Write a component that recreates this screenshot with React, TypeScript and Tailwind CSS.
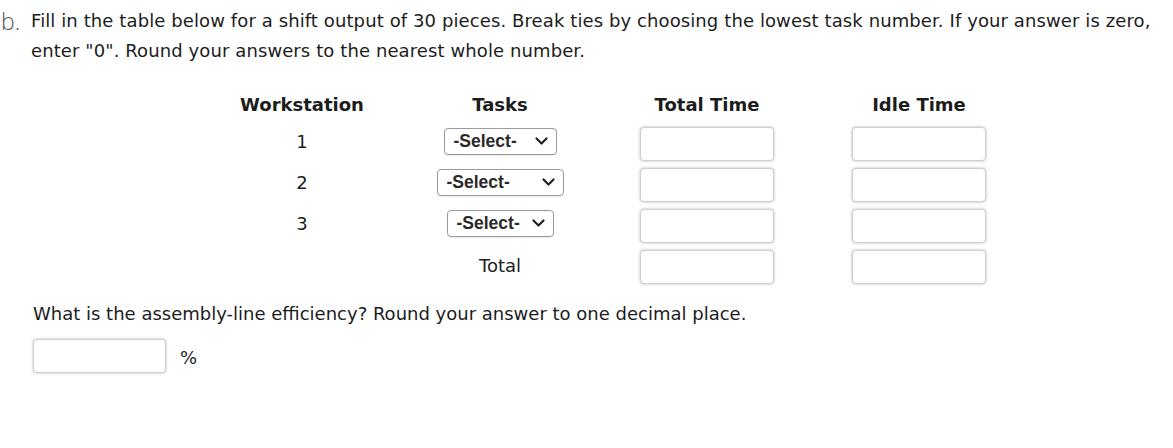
import * as React from 'react'

const rows = [
  { n: '1', w: 'w-[113px]' },
  { n: '2', w: 'w-[127px]' },
  { n: '3', w: 'w-[107px]' },
]

function SelectBox({ w }: { w: string }) {
  return (
    <div className={`${w} h-[27px] flex items-center justify-between pl-[9px] pr-[8px] border border-[#9a9a9a] rounded-[4px] bg-white text-[#2a2a2a] font-bold text-[17.5px] leading-none shadow-[0_1px_1px_rgba(0,0,0,0.08)]`} style={{ fontFamily: '"Liberation Sans", Arial, sans-serif' }}>
      <span>-Select-</span>
      <svg width="13" height="9" viewBox="0 0 13 9" fill="none">
        <path d="M1.5 1.5 L6.5 6.5 L11.5 1.5" stroke="#222" strokeWidth="2.2" strokeLinecap="round" strokeLinejoin="round" />
      </svg>
    </div>
  )
}

function Field({ w = 'w-[134px]' }: { w?: string }) {
  return (
    <div className={`${w} h-[34px] rounded-[4px] bg-white border border-[#cfcfcf] shadow-[0_0_3px_rgba(0,0,0,0.28)]`} />
  )
}

export default function App() {
  return (
    <main className="w-[1173px] h-[448px] bg-white text-[#1c1c1c] text-[18px] overflow-hidden" style={{ fontFamily: 'Verdana, "DejaVu Sans", sans-serif' }}>
      <div className="flex pt-[6px]">
        <span className="w-[31px] pl-[1px] text-[23px] leading-[30px] text-[#555]" style={{ fontFamily: '"Open Sans", sans-serif', fontWeight: 300 }}>b.</span>
        <p className="leading-[30px] tracking-[0.1px]">
          Fill in the table below for a shift output of 30 pieces. Break ties by choosing the lowest task number. If your answer is zero,<br />
          enter "0". Round your answers to the nearest whole number.
        </p>
      </div>

      {/* Table */}
      <div className="ml-[200px] mt-[22px] grid grid-cols-[204px_192px_222px_202px] items-center">
        <div className="h-[35px] pb-[3px] flex items-center justify-center font-bold">Workstation</div>
        <div className="h-[35px] pb-[3px] flex items-center justify-center font-bold">Tasks</div>
        <div className="h-[35px] pb-[3px] flex items-center justify-center font-bold">Total Time</div>
        <div className="h-[35px] pb-[3px] flex items-center justify-center font-bold">Idle Time</div>

        {rows.map((r) => (
          <React.Fragment key={r.n}>
            <div className="h-[41px] flex items-center justify-center pb-[4px]">{r.n}</div>
            <div className="h-[41px] flex items-center justify-center pb-[4px]">
              <SelectBox w={r.w} />
            </div>
            <div className="h-[41px] flex items-center justify-center"><Field /></div>
            <div className="h-[41px] flex items-center justify-center"><Field /></div>
          </React.Fragment>
        ))}

        <div className="h-[41px]" />
        <div className="h-[41px] flex items-center justify-center pb-[2px]">Total</div>
        <div className="h-[41px] flex items-center justify-center"><Field /></div>
        <div className="h-[41px] flex items-center justify-center"><Field /></div>
      </div>

      <p className="ml-[33px] mt-[12px] leading-[30px]">What is the assembly-line efficiency? Round your answer to one decimal place.</p>

      <div className="ml-[33px] mt-[10px] flex items-center gap-[14px]">
        <Field w="w-[133px]" />
        <span className="pt-[2px]">%</span>
      </div>
    </main>
  )
}
